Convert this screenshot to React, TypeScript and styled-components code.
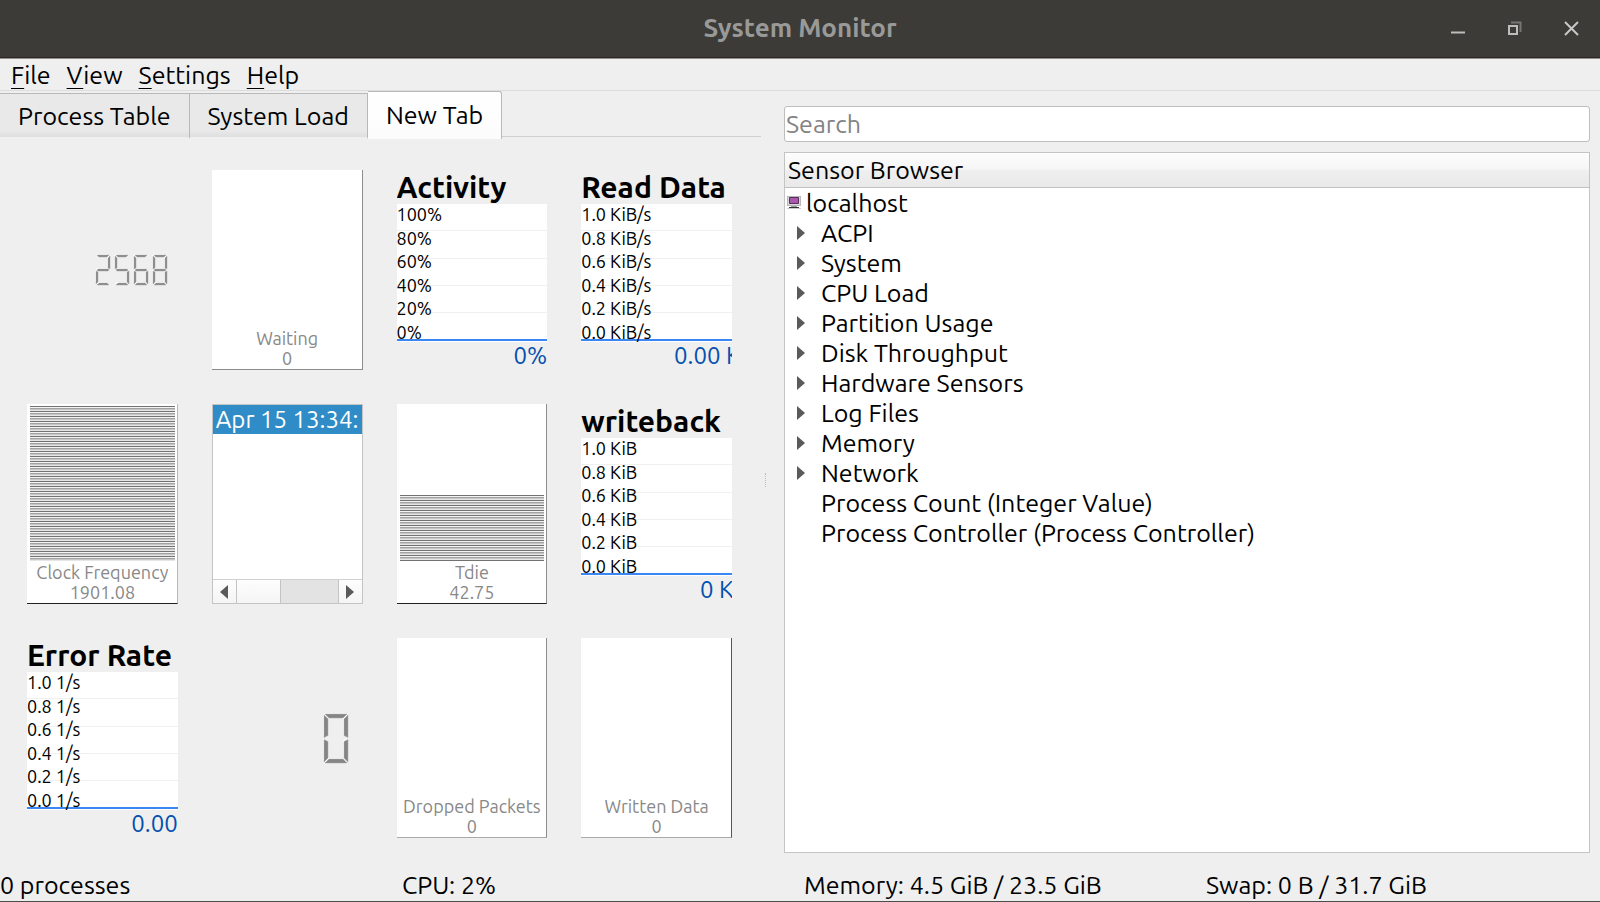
import React from 'react';
import styled, { createGlobalStyle } from 'styled-components';

const Global = createGlobalStyle`
  * { box-sizing: border-box; }
  html, body, #root { height: 100%; }
  body {
    margin: 0;
    background: #efefef;
    color: #000;
    font-family: Ubuntu, "Noto Sans", sans-serif;
    font-size: 25px;
    line-height: 30px;
  }
  button, input { font: inherit; color: inherit; }
  ul { list-style: none; margin: 0; padding: 0; }
`;

const Window = styled.div`
  display: flex;
  flex-direction: column;
  min-height: 100%;
  border-bottom: 1px solid #4c4c4c;
`;

const TitleBar = styled.header`
  display: grid;
  grid-template-columns: 1fr auto 1fr;
  align-items: center;
  height: 59px;
  background: #3c3b38;
  border-bottom: 1px solid #8f8e8c;
  box-shadow: inset 0 -1px 0 #2a2927;
`;

const Title = styled.h1`
  grid-column: 2;
  margin: 0;
  padding-bottom: 2px;
  color: #999a98;
  font-size: 26px;
  line-height: 30px;
  font-weight: 700;
`;

const WindowButtons = styled.div`
  display: flex;
  justify-content: flex-end;
  gap: 33px;
  padding-right: 16px;
`;

const WindowButton = styled.button`
  display: flex;
  width: 24px;
  height: 24px;
  padding: 0;
  border: 0;
  background: none;
`;

const MenuBar = styled.nav`
  display: flex;
  gap: 16px;
  height: 32px;
  padding-left: 11px;
  border-bottom: 1px solid #dcdcdc;
`;

const MenuButton = styled.button`
  padding: 0;
  border: 0;
  background: none;
  line-height: 30px;
  & > u { text-decoration-thickness: 1px; text-underline-offset: 4px; }
`;

const Main = styled.main`
  display: flex;
  flex: 1;
`;

const Sheet = styled.section`
  display: flex;
  flex-direction: column;
  flex: 761 1 0;
  min-width: 0;
`;

const TabList = styled.div`
  display: flex;
  align-items: flex-end;
  height: 48px;
`;

const Tab = styled.button<{ $active?: boolean }>`
  height: ${p => (p.$active ? 48 : 46)}px;
  padding: ${p => (p.$active ? '0 18px 2px' : '0 18px')};
  border: 0 solid #b9b9b9;
  border-width: 1px 1px 0 0;
  border-top-right-radius: ${p => (p.$active ? 3 : 0)}px;
  background: ${p => (p.$active ? 'linear-gradient(#fff, #fcfcfc)' : 'linear-gradient(#e9e9e9 85%, #dfdfdf)')};
  border-bottom: ${p => (p.$active ? '0' : '2px solid #efefef')};
  white-space: nowrap;
`;

const TabRule = styled.div`
  flex: 1;
  height: 3px;
  border-top: 1px solid #cfcfcf;
`;

const Displays = styled.div`
  display: grid;
  grid-template-columns: repeat(4, minmax(0, 1fr));
  grid-template-rows: repeat(3, 200px);
  gap: 34px;
  padding: 31px 29px 0 27px;
`;

const PlotBox = styled.figure`
  display: flex;
  flex-direction: column;
  margin: 0;
  overflow: hidden;
`;

const PlotTitle = styled.figcaption`
  height: 34px;
  font-size: 30px;
  line-height: 34px;
  font-weight: 700;
  white-space: nowrap;
`;

const PlotArea = styled.div`
  height: 138px;
  border-bottom: 1px solid #fff;
  box-shadow: inset 0 -2px 0 #3a86f5;
  background:
    linear-gradient(#f0f0f0, #f0f0f0) 0 26px / 100% 1px no-repeat,
    linear-gradient(#f0f0f0, #f0f0f0) 0 54px / 100% 1px no-repeat,
    linear-gradient(#f0f0f0, #f0f0f0) 0 81px / 100% 1px no-repeat,
    linear-gradient(#f0f0f0, #f0f0f0) 0 108px / 100% 1px no-repeat,
    #fff;
  font-size: 18px;
`;

const Ticks = styled.ul`
  display: flex;
  flex-direction: column;
  justify-content: space-between;
  height: 138px;
  line-height: 20px;
  white-space: nowrap;
`;

const PlotValue = styled.div<{ $visible?: number }>`
  align-self: flex-end;
  width: ${p => (p.$visible ? `${p.$visible}px` : 'auto')};
  height: 28px;
  overflow: hidden;
  color: #0450ae;
  font-size: 24px;
  line-height: 28px;
  white-space: nowrap;
`;

const BarBox = styled.figure<{ $right: string; $bottom: string }>`
  display: flex;
  flex-direction: column;
  justify-content: flex-end;
  margin: 0;
  padding: 2px 2px 1px 3px;
  border: 0 solid;
  border-width: 0 1px 1px 0;
  border-right-color: ${p => p.$right};
  border-bottom-color: ${p => p.$bottom};
  background: #fff;
  color: #888;
  font-size: 18px;
  line-height: 20px;
  text-align: center;
  white-space: nowrap;
`;

const Bar = styled.div`
  margin-bottom: 1px;
  background: repeating-linear-gradient(#727272 0 1px, #f4f4f4 1px 2px, #a2a2a2 2px 3px, #c6c6c6 3px 4px, #e6e6e6 4px 5px);
`;

const LcdBox = styled.div<{ $inset: number }>`
  display: flex;
  align-items: center;
  justify-content: flex-end;
  gap: 5px;
  padding-right: ${p => p.$inset}px;
`;

const LogBox = styled.div`
  display: flex;
  flex-direction: column;
  border: 1px solid #c4c4c4;
  background: #fff;
`;

const LogRow = styled.div`
  flex: 1;
  overflow: hidden;
  & > p {
    margin: 0;
    padding-left: 3px;
    background: #308cc6;
    color: #fff;
    font-size: 24px;
    line-height: 29px;
    white-space: nowrap;
    overflow: hidden;
  }
`;

const ScrollBar = styled.div`
  display: grid;
  grid-template-columns: 24px 44px 1fr 24px;
  height: 24px;
  border-top: 1px solid #d0d0d0;
  background: #e3e3e3;
`;

const ScrollPart = styled.button`
  display: flex;
  align-items: center;
  justify-content: center;
  padding: 0;
  border: 0 solid #c4c4c4;
  border-right-width: 1px;
  background: linear-gradient(#fdfdfd, #f5f5f5);
  &:last-child { grid-column: 4; border-width: 0 0 0 1px; }
`;

const Splitter = styled.div`
  display: flex;
  align-items: center;
  width: 23px;
  padding: 15px 0 0 4px;
  &::before {
    content: '';
    height: 14px;
    border-left: 1px dotted #bbb;
  }
`;

const Browser = styled.aside`
  display: flex;
  flex-direction: column;
  flex: 806 1 0;
  gap: 10px;
  min-width: 0;
  padding: 15px 10px 0 0;
`;

const Search = styled.input`
  height: 36px;
  padding: 0 1px;
  border: 1px solid #bdbdbd;
  border-radius: 3px;
  background: #fff;
  outline: 0;
  &::placeholder { color: #838383; opacity: 1; }
`;

const TreePanel = styled.div`
  display: flex;
  flex-direction: column;
  flex: 1;
  border: 1px solid #c4c4c4;
  background: #fff;
`;

const TreeHeader = styled.h2`
  height: 35px;
  margin: 0;
  padding-left: 3px;
  border-bottom: 1px solid #c0c0c0;
  background: linear-gradient(#fdfdfd, #f5f5f5 50%, #efefef 50%, #e9e9e9);
  font-size: 25px;
  line-height: 35px;
  font-weight: 400;
`;

const TreeRow = styled.li<{ $child?: boolean }>`
  display: grid;
  grid-template-columns: ${p => (p.$child ? '24px' : '19px')} 1fr;
  align-items: center;
  height: 30px;
  padding-left: ${p => (p.$child ? 12 : 2)}px;
  white-space: nowrap;
`;

const StatusBar = styled.footer`
  display: grid;
  grid-template-columns: repeat(4, minmax(0, 1fr));
  column-gap: 8px;
  height: 48px;
  padding: 17px 0 0;
  white-space: nowrap;
`;

const SEGMENTS: Record<string, string> = { '0': 'abcdef', '2': 'abdeg', '5': 'acdfg', '6': 'acdefg', '8': 'abcdefg' };

function LcdDigit({ digit, width: w, height: h, thick: t }: { digit: string; width: number; height: number; thick: number }) {
  const m = h / 2;
  const half = t / 2;
  const shapes: Record<string, string> = {
    a: `M1 0H${w - 1}L${w - 1 - t} ${t}H${1 + t}Z`,
    b: `M${w} 1V${m - 1}L${w - t} ${m - 1 - half}V${1 + t}Z`,
    c: `M${w} ${m + 1}V${h - 1}L${w - t} ${h - 1 - t}V${m + 1 + half}Z`,
    d: `M1 ${h}H${w - 1}L${w - 1 - t} ${h - t}H${1 + t}Z`,
    e: `M0 ${m + 1}V${h - 1}L${t} ${h - 1 - t}V${m + 1 + half}Z`,
    f: `M0 1V${m - 1}L${t} ${m - 1 - half}V${1 + t}Z`,
    g: `M1 ${m}L${1 + half} ${m - half}H${w - 1 - half}L${w - 1} ${m}L${w - 1 - half} ${m + half}H${1 + half}Z`,
  };
  const d = SEGMENTS[digit].split('').map(s => shapes[s]).join('');
  return (
    <svg width={w} height={h} overflow="visible" aria-hidden="true">
      <path d={d} fill="#fff" transform="translate(-1 -1)" />
      <path d={d} fill="#858585" stroke="#a8a8a8" strokeWidth="0.5" />
    </svg>
  );
}

function Lcd({ value, inset, width, height, thick }: { value: string; inset: number; width: number; height: number; thick: number }) {
  return (
    <LcdBox $inset={inset} role="img" aria-label={value}>
      {value.split('').map((c, i) => (
        <LcdDigit key={i} digit={c} width={width} height={height} thick={thick} />
      ))}
    </LcdBox>
  );
}

function Plot({ title, ticks, value, visible }: { title: string; ticks: string[]; value: string; visible?: number }) {
  return (
    <PlotBox>
      <PlotTitle>{title}</PlotTitle>
      <PlotArea>
        <Ticks>{ticks.map(t => <li key={t}>{t}</li>)}</Ticks>
      </PlotArea>
      <PlotValue $visible={visible}>{value}</PlotValue>
    </PlotBox>
  );
}

interface BarProps {
  label: string;
  value: string;
  level?: number;
  right?: string;
  bottom?: string;
}

function BarDisplay({ label, value, level = 0, right = '#8c8c8c', bottom = '#8c8c8c' }: BarProps) {
  return (
    <BarBox $right={right} $bottom={bottom}>
      <Bar style={{ height: level }} />
      <span>{label}</span>
      <span>{value}</span>
    </BarBox>
  );
}

const Arrow = ({ left }: { left?: boolean }) => (
  <svg width="8" height="14" aria-hidden="true">
    <path d={left ? 'M8 0V14L0 7Z' : 'M0 0V14L8 7Z'} fill="#5a5a5a" />
  </svg>
);

const ComputerIcon = () => (
  <svg width="14" height="14" aria-hidden="true">
    <rect x="0.5" y="0.5" width="13" height="9" fill="#d8d8d8" stroke="#b9b9b9" />
    <path d="M2.5 1.5H11.5V7.5H2.5Z" fill="#a858aa" stroke="#5a2f5e" />
    <path d="M4 10H10V11H4Z" fill="#999" />
    <path d="M2 11H12V12H2Z" fill="#333" />
    <path d="M0 12.5H14" stroke="#ccc" />
  </svg>
);

const scale = (unit: string) => ['1.0', '0.8', '0.6', '0.4', '0.2', '0.0'].map(n => `${n} ${unit}`);
const MENUS = ['File', 'View', 'Settings', 'Help'];
const SENSORS = ['ACPI', 'System', 'CPU Load', 'Partition Usage', 'Disk Throughput', 'Hardware Sensors', 'Log Files', 'Memory', 'Network'];
const LEAVES = ['Process Count (Integer Value)', 'Process Controller (Process Controller)'];

export default function App() {
  return (
    <>
      <Global />
      <Window>
        <TitleBar>
          <Title>System Monitor</Title>
          <WindowButtons>
            <WindowButton aria-label="Minimize">
              <svg width="24" height="24"><path d="M5 15.5H19" stroke="#bdbdbb" strokeWidth="2" /></svg>
            </WindowButton>
            <WindowButton aria-label="Restore">
              <svg width="24" height="24" fill="none">
                <path d="M8 5.5H17.5V15" stroke="#777674" strokeWidth="2" />
                <rect x="6" y="9" width="8" height="8" stroke="#bdbdbb" strokeWidth="2" />
              </svg>
            </WindowButton>
            <WindowButton aria-label="Close">
              <svg width="24" height="24"><path d="M5 5L18 18M18 5L5 18" stroke="#c8c8c6" strokeWidth="2" /></svg>
            </WindowButton>
          </WindowButtons>
        </TitleBar>
        <MenuBar>
          {MENUS.map(m => (
            <MenuButton key={m}><u>{m[0]}</u>{m.slice(1)}</MenuButton>
          ))}
        </MenuBar>
        <Main>
          <Sheet>
            <TabList role="tablist">
              <Tab role="tab">Process Table</Tab>
              <Tab role="tab">System Load</Tab>
              <Tab role="tab" aria-selected="true" $active>New Tab</Tab>
              <TabRule />
            </TabList>
            <Displays>
              <Lcd value="2568" inset={11} width={14} height={30} thick={2} />
              <BarDisplay label="Waiting" value="0" />
              <Plot title="Activity" ticks={['100%', '80%', '60%', '40%', '20%', '0%']} value="0%" />
              <Plot title="Read Data" ticks={scale('KiB/s')} value="0.00 KiB/s" visible={58} />
              <BarDisplay label="Clock Frequency" value="1901.08" level={156} right="#b8b8b8" bottom="#222" />
              <LogBox>
                <LogRow><p>Apr 15 13:34:</p></LogRow>
                <ScrollBar>
                  <ScrollPart aria-label="Scroll left"><Arrow left /></ScrollPart>
                  <ScrollPart aria-label="Scroll position" />
                  <ScrollPart aria-label="Scroll right"><Arrow /></ScrollPart>
                </ScrollBar>
              </LogBox>
              <BarDisplay label="Tdie" value="42.75" level={66} bottom="#222" />
              <Plot title="writeback" ticks={scale('KiB')} value="0 KiB" visible={32} />
              <Plot title="Error Rate" ticks={scale('1/s')} value="0.00" />
              <Lcd value="0" inset={15} width={24} height={49} thick={4} />
              <BarDisplay label="Dropped Packets" value="0" bottom="#aaa" />
              <BarDisplay label="Written Data" value="0" right="#555" bottom="#aaa" />
            </Displays>
          </Sheet>
          <Splitter />
          <Browser>
            <Search type="search" placeholder="Search" aria-label="Search" />
            <TreePanel>
              <TreeHeader>Sensor Browser</TreeHeader>
              <ul>
                <TreeRow><ComputerIcon /><span>localhost</span></TreeRow>
                {SENSORS.map(s => <TreeRow key={s} $child><Arrow /><span>{s}</span></TreeRow>)}
                {LEAVES.map(s => <TreeRow key={s} $child><i /><span>{s}</span></TreeRow>)}
              </ul>
            </TreePanel>
          </Browser>
        </Main>
        <StatusBar>
          <span>0 processes</span>
          <span>CPU: 2%</span>
          <span>Memory: 4.5 GiB / 23.5 GiB</span>
          <span>Swap: 0 B / 31.7 GiB</span>
        </StatusBar>
      </Window>
    </>
  );
}
